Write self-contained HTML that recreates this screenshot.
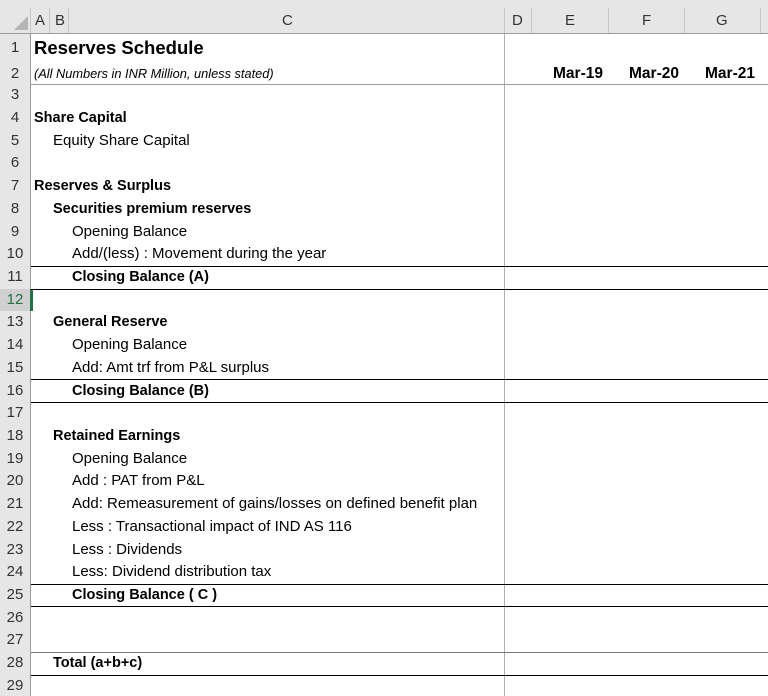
<!DOCTYPE html><html><head><style>
body{margin:0;width:768px;height:696px;position:relative;background:#fff;font-family:"Liberation Sans",Carlito,sans-serif;overflow:hidden;color:#000}
.hd{position:absolute;left:0;top:0;width:768px;height:33px;background:#e6e6e6;border-bottom:1px solid #9b9b9b}
.rh{position:absolute;left:0;top:34px;width:30px;height:662px;background:#e6e6e6;border-right:1px solid #9b9b9b}
.c{position:absolute;top:12px;font-size:15px;color:#333;line-height:18px}
.vs{position:absolute;top:8px;width:1px;height:25px;background:#c8c8c8}
.n{position:absolute;left:0;width:30px;text-align:center;font-size:15px;line-height:18px;color:#333}
.t{position:absolute;font-size:15px;line-height:18px;white-space:nowrap}
.b{font-weight:bold;font-size:14.5px}
.l{position:absolute;left:31px;width:737px;height:1px;background:#000}
</style></head><body>
<div class="hd"></div>
<div class="rh"></div>
<svg style="position:absolute;left:14px;top:16px" width="14" height="14"><polygon points="14,0 14,14 0,14" fill="#b5b5b5"/></svg>
<div class="vs" style="left:30px"></div><div class="vs" style="left:49px"></div><div class="vs" style="left:68px"></div><div class="vs" style="left:504px"></div><div class="vs" style="left:531px"></div><div class="vs" style="left:608px"></div><div class="vs" style="left:684px"></div><div class="vs" style="left:760px"></div>
<div class="c" style="left:35px">A</div><div class="c" style="left:55px">B</div><div class="c" style="left:282px">C</div><div class="c" style="left:512px">D</div><div class="c" style="left:565px">E</div><div class="c" style="left:642px">F</div><div class="c" style="left:716px">G</div>
<div style="position:absolute;left:0;top:289px;width:30px;height:22px;background:#d0d0d0;border-right:2px solid #217346"></div>
<div style="position:absolute;left:31px;top:289px;width:2px;height:22px;background:#217346"></div>
<div class="n" style="top:39px">1</div><div class="n" style="top:65px">2</div><div class="n" style="top:86px">3</div><div class="n" style="top:109px">4</div><div class="n" style="top:132px">5</div><div class="n" style="top:154px">6</div><div class="n" style="top:177px">7</div><div class="n" style="top:200px">8</div><div class="n" style="top:223px">9</div><div class="n" style="top:245px">10</div><div class="n" style="top:268px">11</div><div class="n" style="top:291px;color:#217346">12</div><div class="n" style="top:313px">13</div><div class="n" style="top:336px">14</div><div class="n" style="top:359px">15</div><div class="n" style="top:382px">16</div><div class="n" style="top:404px">17</div><div class="n" style="top:427px">18</div><div class="n" style="top:450px">19</div><div class="n" style="top:472px">20</div><div class="n" style="top:495px">21</div><div class="n" style="top:518px">22</div><div class="n" style="top:541px">23</div><div class="n" style="top:563px">24</div><div class="n" style="top:586px">25</div><div class="n" style="top:609px">26</div><div class="n" style="top:631px">27</div><div class="n" style="top:654px">28</div><div class="n" style="top:677px">29</div>
<div style="position:absolute;left:504px;top:34px;width:1px;height:662px;background:#b0b0b0"></div>
<div style="position:absolute;left:31px;top:84px;width:737px;height:1px;background:#9b9b9b"></div>
<div class="l" style="top:266px"></div><div class="l" style="top:289px"></div><div class="l" style="top:379px"></div><div class="l" style="top:402px"></div><div class="l" style="top:584px"></div><div class="l" style="top:606px"></div><div class="l" style="top:652px;background:#777"></div><div class="l" style="top:675px"></div>
<div class="t b" style="left:34px;top:37px;font-size:18.5px;line-height:22px">Reserves Schedule</div>
<div class="t" style="left:34px;top:65px;font-size:12.8px;font-style:italic">(All Numbers in INR Million, unless stated)</div>
<div class="t b" style="left:553px;top:65px;font-size:15.5px">Mar-19</div><div class="t b" style="left:629px;top:65px;font-size:15.5px">Mar-20</div><div class="t b" style="left:705px;top:65px;font-size:15.5px">Mar-21</div>
<div class="t b" style="left:34px;top:109px">Share Capital</div>
<div class="t" style="left:53px;top:132px">Equity Share Capital</div>
<div class="t b" style="left:34px;top:177px">Reserves &amp; Surplus</div>
<div class="t b" style="left:53px;top:200px">Securities premium reserves</div>
<div class="t" style="left:72px;top:223px">Opening Balance</div>
<div class="t" style="left:72px;top:245px">Add/(less) : Movement during the year</div>
<div class="t b" style="left:72px;top:268px">Closing Balance (A)</div>
<div class="t b" style="left:53px;top:313px">General Reserve</div>
<div class="t" style="left:72px;top:336px">Opening Balance</div>
<div class="t" style="left:72px;top:359px">Add: Amt trf from P&amp;L surplus</div>
<div class="t b" style="left:72px;top:382px">Closing Balance (B)</div>
<div class="t b" style="left:53px;top:427px">Retained Earnings</div>
<div class="t" style="left:72px;top:450px">Opening Balance</div>
<div class="t" style="left:72px;top:472px">Add : PAT from P&amp;L</div>
<div class="t" style="left:72px;top:495px">Add: Remeasurement of gains/losses on defined benefit plan</div>
<div class="t" style="left:72px;top:518px">Less : Transactional impact of IND AS 116</div>
<div class="t" style="left:72px;top:541px">Less : Dividends</div>
<div class="t" style="left:72px;top:563px">Less: Dividend distribution tax</div>
<div class="t b" style="left:72px;top:586px">Closing Balance ( C )</div>
<div class="t b" style="left:53px;top:654px">Total (a+b+c)</div>
</body></html>
